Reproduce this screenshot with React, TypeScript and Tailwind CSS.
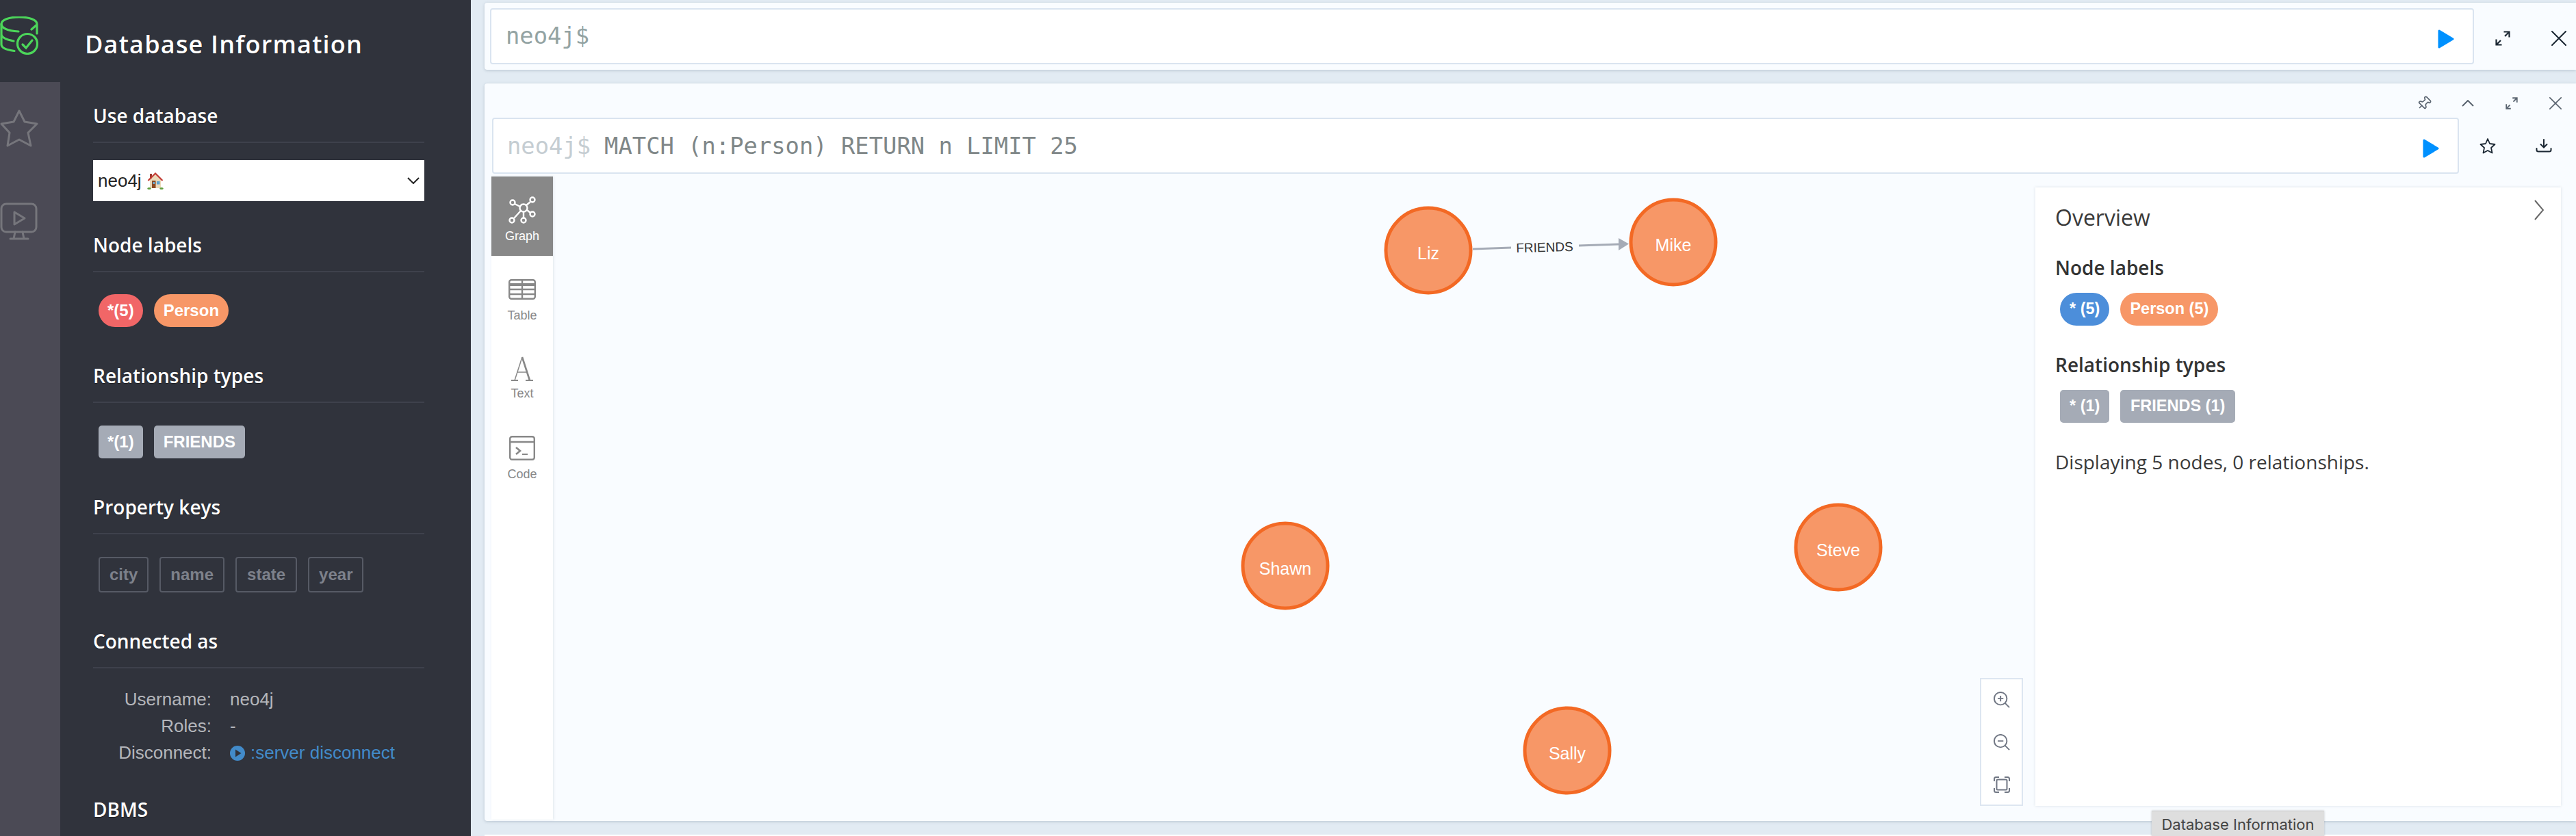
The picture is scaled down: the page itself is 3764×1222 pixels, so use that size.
import React from "react";
import { Pin } from "lucide-react";

const sans = "font-['Liberation_Sans',sans-serif]";
const open = "font-['Open_Sans',sans-serif]";
const mono = "font-['DejaVu_Sans_Mono',monospace]";

function Expand({ className }: { className: string }) {
  return (
    <svg viewBox="0 0 22 22" fill="none" stroke="currentColor" strokeWidth="2.2" className={className}>
      <path d="M1.5 20.5 L8 14 M1.5 12.5 V20.5 H9.5 M20.5 1.5 L14 8 M12.5 1.5 H20.5 V9.5" />
    </svg>
  );
}

function Close({ className }: { className: string }) {
  return (
    <svg viewBox="0 0 22 22" fill="none" stroke="currentColor" strokeWidth="2" strokeLinecap="round" className={className}>
      <path d="M1 1 L21 21 M21 1 L1 21" />
    </svg>
  );
}

function Play({ className }: { className: string }) {
  return (
    <svg viewBox="0 0 24 28" className={className}>
      <path d="M2 2 L22 14 L2 26 Z" fill="#0091ff" stroke="#0091ff" strokeWidth="3" strokeLinejoin="round" />
    </svg>
  );
}

function SectionHead({ title, top }: { title: string; top: string }) {
  return (
    <>
      <h3 className={`${open} ${top} h-[40px] text-[28px] leading-[40px] font-semibold text-white [text-shadow:0_1px_1px_rgba(0,0,0,0.5)]`}>
        {title}
      </h3>
      <div className="mt-[18px] h-[2px] bg-[#3e414c]" />
    </>
  );
}

function Chip({ text, cls }: { text: string; cls: string }) {
  return <span className={`${sans} ${cls} flex h-[48px] items-center font-bold text-white`}>{text}</span>;
}

function Tab({ label, active, icon, labelTop = "mt-[4px]" }: { label: string; active?: boolean; icon: React.ReactNode; labelTop?: string }) {
  return (
    <div className={`${active ? "bg-[#888888] text-white" : "text-[#888888]"} flex h-[116px] flex-col items-center`}>
      <div className="mt-[29px] flex h-[40px] items-center justify-center">{icon}</div>
      <span className={`${sans} ${labelTop} text-[18px] leading-[28px]`}>{label}</span>
    </div>
  );
}

function Node({ x, y, name }: { x: number; y: number; name: string }) {
  return (
    <g>
      <circle cx={x} cy={y} r="62" fill="#f79767" stroke="#f36924" strokeWidth="5" />
      <text x={x} y={y + 12.5} textAnchor="middle" fontSize="25" fill="#ffffff" fontFamily="Liberation Sans">
        {name}
      </text>
    </g>
  );
}

export default function App() {
  return (
    <div className="relative flex h-[1222px] w-[3764px] overflow-hidden bg-[#e2ebf3]">
      {/* left nav */}
      <div className="flex w-[88px] flex-col bg-[#30333c]">
        <div className="h-[120px] pt-[24px]">
          <svg width="56" height="56" viewBox="0 0 56 56" fill="none" stroke="#4cd65a" strokeWidth="3.2" strokeLinecap="round">
            <path d="M27 22 C11 21 2 17 2 11 C2 5 13 1 28 1 C43 1 54 5 54 11 V25 M46 19 L54 12" />
            <path d="M2 11 V41 C2 46 10 49 21 50.5 M2 26 C2 31 10 34 20 36" />
            <circle cx="40" cy="40" r="14.5" />
            <path d="M33 41 L38 46 L47 35" />
          </svg>
        </div>
        <div className="flex-1 bg-[#4b4a55] pt-[40px]">
          <svg width="56" height="56" viewBox="0 0 56 56" fill="none" stroke="#76767c" strokeWidth="3" strokeLinejoin="round">
            <path d="M28 2 L36 18 L54 21 L41 34 L45 53 L28 44 L11 53 L14 34 L2 21 L20 18 Z" />
          </svg>
          <svg width="56" height="56" viewBox="0 0 56 56" fill="none" stroke="#76767c" strokeWidth="3" strokeLinecap="round" strokeLinejoin="round" className="mt-[80px]">
            <rect x="2" y="2" width="51" height="41" rx="7" />
            <path d="M21 14 L36 23 L21 32 Z" />
            <path d="M22 43 L20 53 M33 43 L35 53 M15 53 H41" />
          </svg>
        </div>
      </div>

      {/* database information drawer */}
      <div className="w-[600px] bg-[#30333c] pt-[40px]">
        <h2 className={`${open} ml-[36px] h-[50px] text-[36px] leading-[50px] font-semibold tracking-[1.2px] text-white [text-shadow:0_1px_1px_rgba(0,0,0,0.5)]`}>
          Database Information
        </h2>
        <div className="mr-[68px] ml-[48px]">
          <SectionHead title="Use database" top="mt-[59px]" />
          <div className={`${sans} mt-[25px] flex h-[60px] items-center bg-white pr-[7px] pl-[7px] text-[26px] text-[#222222]`}>
            <span>neo4j</span>
            <svg width="24" height="26" viewBox="0 0 24 26" className="ml-[8px]">
              <rect x="4" y="3" width="3" height="7" fill="#9c3a2e" />
              <path d="M4 12 L12 4 L20 12 V24 H4 Z" fill="#ead9b8" />
              <path d="M1.5 13 L12 2.5 L22.5 13" fill="none" stroke="#c23b32" strokeWidth="2.2" />
              <rect x="7" y="13" width="5.5" height="11" fill="#8a4b24" />
              <rect x="8.5" y="15" width="2.5" height="3" fill="#6fb0d8" />
              <rect x="14" y="14" width="4.5" height="4.5" fill="#5ba3d0" />
              <ellipse cx="3" cy="24.5" rx="2.8" ry="1.5" fill="#5f9e3f" />
              <ellipse cx="21" cy="24.5" rx="2.8" ry="1.5" fill="#5f9e3f" />
            </svg>
            <svg width="18" height="10" viewBox="0 0 18 10" fill="none" stroke="#222222" strokeWidth="2" className="ml-auto">
              <path d="M1 1 L9 9 L17 1" />
            </svg>
          </div>

          <SectionHead title="Node labels" top="mt-[44px]" />
          <div className="mt-[32px] ml-[8px] flex gap-[16px] text-[24px]">
            <Chip text="*(5)" cls="rounded-full bg-[#f16667] px-[13px]" />
            <Chip text="Person" cls="rounded-full bg-[#f79767] px-[14px]" />
          </div>

          <SectionHead title="Relationship types" top="mt-[51px]" />
          <div className="mt-[33px] ml-[8px] flex gap-[16px] text-[24px]">
            <Chip text="*(1)" cls="rounded-[5px] bg-[#a5abb6] px-[13px]" />
            <Chip text="FRIENDS" cls="rounded-[5px] bg-[#a5abb6] px-[14px]" />
          </div>

          <SectionHead title="Property keys" top="mt-[51px]" />
          <div className="mt-[33px] ml-[8px] flex gap-[16px]">
            {["city", "name", "state", "year"].map((k) => (
              <span
                key={k}
                className={`${sans} ${k === "state" ? "px-[15px]" : "px-[14px]"} flex h-[52px] items-center rounded-[4px] border-2 border-[#565a65] text-[24px] font-bold text-[#7d818b]`}
              >
                {k}
              </span>
            ))}
          </div>

          <SectionHead title="Connected as" top="mt-[51px]" />
          <div className={`${sans} mt-[26px] text-[26px] leading-[39px] text-[#b4b6bb]`}>
            <div className="flex">
              <span className="w-[173px] text-right">Username:</span>
              <span className="ml-[27px]">neo4j</span>
            </div>
            <div className="flex">
              <span className="w-[173px] text-right">Roles:</span>
              <span className="ml-[27px]">-</span>
            </div>
            <div className="flex">
              <span className="w-[173px] text-right">Disconnect:</span>
              <span className="ml-[27px] flex items-center text-[#428bca]">
                <svg width="22" height="22" viewBox="0 0 22 22" className="mr-[8px]">
                  <circle cx="11" cy="11" r="11" fill="#428bca" />
                  <path d="M8 5.5 L16.5 11 L8 16.5 Z" fill="#30333c" />
                </svg>
                :server disconnect
              </span>
            </div>
          </div>

          <h3 className={`${open} mt-[43px] h-[40px] text-[28px] leading-[40px] font-semibold text-white [text-shadow:0_1px_1px_rgba(0,0,0,0.5)]`}>
            DBMS
          </h3>
        </div>
      </div>

      {/* stream */}
      <div className="flex flex-1 flex-col pt-[4px] pl-[20px]">
        <div className="flex h-[98px] items-center rounded-l-[4px] bg-[#f9fcff] pl-[8px] shadow-[0_1px_4px_rgba(90,110,130,0.3)]">
          <div className={`${mono} flex h-[82px] w-[2899px] items-center rounded-[4px] border-2 border-[#dae4f0] bg-white pr-[27px] pl-[21px] text-[33.8px] text-[#93a3a3]`}>
            <span>neo4j$</span>
            <Play className="mt-[8px] ml-auto h-[28px] w-[24px]" />
          </div>
          <Expand className="mt-[6px] ml-[31px] h-[22px] w-[22px] text-[#1b2733]" />
          <Close className="mt-[6px] ml-[60px] h-[22px] w-[22px] text-[#1b2733]" />
        </div>

        <div className="mt-[20px] flex h-[1078px] flex-col rounded-l-[4px] bg-[#f9fcff] shadow-[0_1px_4px_rgba(90,110,130,0.3)]">
          <div className="flex h-[50px] items-center justify-end pt-[8px] text-[#5a6470]">
            <Pin size={22} strokeWidth={1.8} className="mr-[44px] rotate-45" />
            <svg width="18" height="10" viewBox="0 0 18 10" fill="none" stroke="currentColor" strokeWidth="2" className="mr-[46px]">
              <path d="M1 9 L9 1 L17 9" />
            </svg>
            <Expand className="mr-[46px] h-[18px] w-[18px]" />
            <Close className="mr-[21px] h-[18px] w-[18px]" />
          </div>

          <div className="flex h-[82px] items-center pl-[11px]">
            <div className={`${mono} flex h-[82px] w-[2874px] items-center rounded-[4px] border-2 border-[#dae4f0] bg-white pr-[27px] pl-[20px] text-[33.8px]`}>
              <span className="pt-[3px] text-[#c5cdd2]">neo4j$</span>
              <span className="ml-[20px] pt-[3px] text-[#7f8788]">MATCH (n:Person) RETURN n LIMIT 25</span>
              <Play className="mt-[8px] ml-auto h-[28px] w-[24px]" />
            </div>
            <svg width="24" height="24" viewBox="0 0 24 24" fill="none" stroke="#1b2733" strokeWidth="1.8" strokeLinejoin="round" className="ml-[30px]">
              <path d="M12 2 L15 9 L22.5 10 L17 15 L18.5 22.5 L12 19 L5.5 22.5 L7 15 L1.5 10 L9 9 Z" />
            </svg>
            <svg width="24" height="20" viewBox="0 0 24 20" fill="none" stroke="#1b2733" strokeWidth="2" strokeLinecap="round" className="ml-[58px]">
              <path d="M12 1 V12 M7.5 8 L12 12.5 L16.5 8 M1.5 14 V16 C1.5 18 2.5 18.5 4 18.5 H20 C21.5 18.5 22.5 18 22.5 16 V14" />
            </svg>
          </div>

          <div className="relative mt-[4px] flex h-[940px]">
            <div className="ml-[10px] w-[90px] bg-white shadow-[1px_0_3px_rgba(90,110,130,0.15)]">
              <Tab
                active
                label="Graph"
                icon={
                  <svg width="40" height="40" viewBox="0 0 40 40" fill="none" stroke="currentColor" strokeWidth="2.4">
                    <circle cx="22" cy="17" r="5.5" />
                    <circle cx="6" cy="9" r="3.5" />
                    <circle cx="35" cy="5" r="3.5" />
                    <circle cx="35" cy="26" r="3.5" />
                    <circle cx="22" cy="35" r="3.5" />
                    <circle cx="5" cy="35" r="3.5" />
                    <path d="M9 11 L17 15 M32 8 L26 13 M32 24 L27 20 M22 23 V31 M8 32 L18 21" />
                  </svg>
                }
              />
              <Tab
                label="Table"
                icon={
                  <svg width="40" height="30" viewBox="0 0 40 30" fill="none" stroke="currentColor" strokeWidth="2.4">
                    <rect x="1.2" y="1.2" width="37.6" height="27.6" rx="3" />
                    <path d="M1 8 H39" strokeWidth="4" />
                    <path d="M1 15 H39 M1 22 H39 M20 1 V29" />
                  </svg>
                }
              />
              <Tab
                label="Text"
                labelTop="mt-[2px]"
                icon={
                  <svg width="34" height="36" viewBox="0 0 34 36" fill="none" stroke="currentColor">
                    <path d="M6 35 L17 1" strokeWidth="1.5" />
                    <path d="M17 1 L28 35" strokeWidth="2.6" />
                    <path d="M9.5 23 H24" strokeWidth="1.5" />
                    <path d="M1 35 H11 M22 35 H33" strokeWidth="1.8" />
                  </svg>
                }
              />
              <Tab
                label="Code"
                icon={
                  <svg width="38" height="36" viewBox="0 0 38 36" fill="none" stroke="currentColor" strokeWidth="2.4">
                    <rect x="1.2" y="1.2" width="35.6" height="33.6" rx="3" />
                    <path d="M1 9 H37" />
                    <path d="M10 17 L16 22 L10 27" strokeWidth="2.6" />
                    <path d="M19 27 H27" strokeWidth="2" />
                  </svg>
                }
              />
            </div>

            <div className="relative flex-1">
              <svg width="2166" height="940" viewBox="0 0 2166 940">
                <path d="M1344 106 L1400 104 M1499 101 L1557 99" stroke="#a5abb6" strokeWidth="3" fill="none" />
                <path d="M1557 90 L1572 98.5 L1557 108 Z" fill="#a5abb6" />
                <text x="1449" y="110" textAnchor="middle" fontSize="19" fill="#333333" fontFamily="Liberation Sans" transform="rotate(-1.5 1449 103)">
                  FRIENDS
                </text>
                <Node x={1279} y={108} name="Liz" />
                <Node x={1637} y={96} name="Mike" />
                <Node x={1070} y={569} name="Shawn" />
                <Node x={1878} y={542} name="Steve" />
                <Node x={1482} y={839} name="Sally" />
              </svg>

              {/* zoom controls */}
              <div className="absolute top-[733px] right-[18px] flex h-[187px] w-[63px] flex-col items-center gap-[38px] border-2 border-[#dde6f1] bg-white pt-[18px] text-[#717784]">
                <svg width="24" height="24" viewBox="0 0 26 26" fill="none" stroke="currentColor" strokeWidth="2.1" className="shrink-0">
                  <circle cx="11" cy="11" r="10" />
                  <path d="M18 18 L25 25 M6.5 11 H15.5 M11 6.5 V15.5" />
                </svg>
                <svg width="24" height="24" viewBox="0 0 26 26" fill="none" stroke="currentColor" strokeWidth="2.1" className="shrink-0">
                  <circle cx="11" cy="11" r="10" />
                  <path d="M18 18 L25 25 M6.5 11 H15.5" />
                </svg>
                <svg width="24" height="24" viewBox="0 0 24 24" fill="none" stroke="currentColor" strokeWidth="2" className="shrink-0">
                  <rect x="4.5" y="4.5" width="15" height="15" rx="1.5" />
                  <path d="M1 7 V3.5 C1 2 2 1 3.5 1 H8 M16 1 H20.5 C22 1 23 2 23 3.5 V7 M23 17 V20.5 C23 22 22 23 20.5 23 H16 M8 23 H3.5 C2 23 1 22 1 20.5 V17" />
                </svg>
              </div>
            </div>

            {/* overview panel */}
            <div className="mt-[16px] mr-[22px] mb-[20px] w-[768px] bg-white pt-[22px] pl-[29px] shadow-[0_0_4px_rgba(90,110,130,0.2)]">
              <div className="flex items-start justify-between pr-[25px]">
                <h3 className={`${open} h-[44px] text-[32px] leading-[44px] text-[#3a3a3a]`}>Overview</h3>
                <svg width="14" height="30" viewBox="0 0 14 30" fill="none" stroke="#666666" strokeWidth="2" className="-mt-[4px]">
                  <path d="M1 1 L13 15 L1 29" />
                </svg>
              </div>
              <h4 className={`${open} mt-[31px] h-[40px] text-[28px] leading-[40px] font-semibold text-[#333333]`}>Node labels</h4>
              <div className="mt-[17px] ml-[7px] flex gap-[16px] text-[23.5px]">
                <Chip text="* (5)" cls="rounded-full bg-[#4c8eda] px-[14px]" />
                <Chip text="Person (5)" cls="rounded-full bg-[#f79767] px-[14px]" />
              </div>
              <h4 className={`${open} mt-[37px] h-[40px] text-[28px] leading-[40px] font-semibold text-[#333333]`}>Relationship types</h4>
              <div className="mt-[17px] ml-[7px] flex gap-[16px] text-[23.5px]">
                <Chip text="* (1)" cls="rounded-[5px] bg-[#a5abb6] px-[14px]" />
                <Chip text="FRIENDS (1)" cls="rounded-[5px] bg-[#a5abb6] px-[14.5px]" />
              </div>
              <p className={`${open} mt-[37px] text-[28px] leading-[40px] text-[#3a3a3a]`}>Displaying 5 nodes, 0 relationships.</p>
            </div>
          </div>
        </div>

        <div className="mt-[20px] h-[2px] bg-white" />
      </div>

      {/* tooltip */}
      <div className="absolute top-[1185px] left-[3144px] flex h-[40px] w-[252px] items-start justify-center border-t border-[#cfcfcf] bg-[#dedede] pt-[3px] font-['Inter',sans-serif] text-[22px] leading-[32px] text-[#444444] shadow-[0_0_3px_rgba(0,0,0,0.2)]">
        Database Information
      </div>
    </div>
  );
}
